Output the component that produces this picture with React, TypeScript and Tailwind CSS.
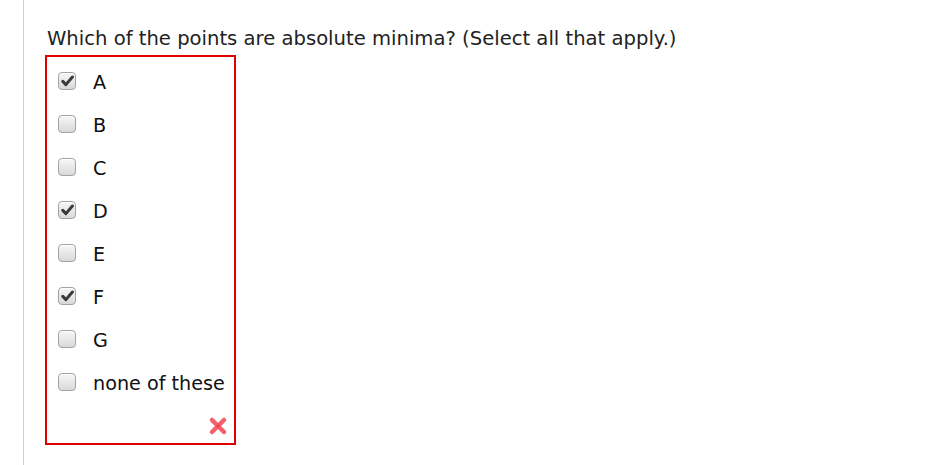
import React from "react";

const options = [
    { label: "A", checked: true },
    { label: "B", checked: false },
    { label: "C", checked: false },
    { label: "D", checked: true },
    { label: "E", checked: false },
    { label: "F", checked: true },
    { label: "G", checked: false },
    { label: "none of these", checked: false },
];

function Box({ checked }: { checked: boolean }) {
    return (
        <span className="w-[18px] h-[18px] -translate-y-[2px] rounded-[4px] border border-[#a3a3a3] bg-gradient-to-b from-[#f7f7f7] to-[#d9d9d9] shadow-[inset_0_1px_0_#fff] flex items-center justify-center shrink-0">
            {checked && (
                <svg width="13" height="12" viewBox="0 0 13 12">
                    <path d="M1.8 6.4 L4.9 9.6 L11.4 2" fill="none" stroke="#3a3a3a" strokeWidth="3" strokeLinecap="round" strokeLinejoin="round" />
                </svg>
            )}
        </span>
    );
}

export default function App() {
    return (
        <div className="w-[926px] h-[465px] bg-white overflow-hidden font-['DejaVu_Sans',Verdana,sans-serif] text-[#222]">
            <div className="ml-[23px] h-full border-l border-[#cfcfcf] pl-[21px] pt-[26px]">
                <p className="text-[19.6px] leading-[26px] pl-[2px] text-[#222]">
                    Which of the points are absolute minima? (Select all that apply.)
                </p>
                <div className="mt-[3px] w-[191px] border-2 border-[#e00000] pt-[4px] pl-[11px] pr-[6px] pb-[7px]">
                    {options.map((o) => (
                        <div key={o.label} className="h-[43px] flex items-center gap-[17px]">
                            <Box checked={o.checked} />
                            <span className="text-[19.2px] text-[#111] translate-y-[1px]">{o.label}</span>
                        </div>
                    ))}
                    <div className="mt-[11px] h-[20px] flex justify-end">
                        <svg width="20" height="20" viewBox="0 0 20 20">
                            <path d="M4 4 L16 16 M16 4 L4 16" stroke="#f45f6b" strokeWidth="4.5" strokeLinecap="round" />
                            <circle cx="10" cy="10" r="1.6" fill="#e3404c" />
                        </svg>
                    </div>
                </div>
            </div>
        </div>
    );
}
